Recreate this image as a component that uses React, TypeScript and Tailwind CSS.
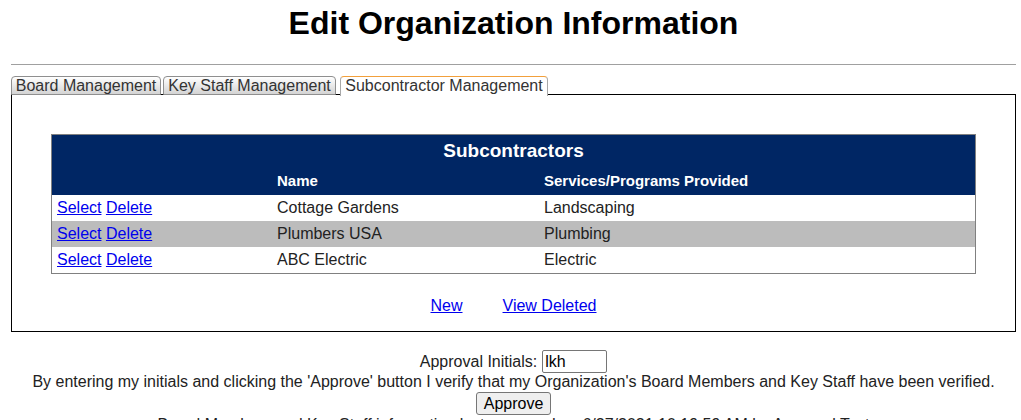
const rows = [
  { name: "Cottage Gardens", service: "Landscaping" },
  { name: "Plumbers USA", service: "Plumbing" },
  { name: "ABC Electric", service: "Electric" },
];

const tabs = [
  { label: "Board Management", w: "w-[150px]" },
  { label: "Key Staff Management", w: "w-[173px]" },
  { label: "Subcontractor Management", w: "w-[208px]" },
];
const ACTIVE_TAB = 2;

export default function App() {
  return (
    <div className="min-h-screen bg-white font-['Liberation_Sans',Arial,sans-serif] text-[16px] text-black">
      <div className="ml-[11px] mr-[5px]">
        <h1 className="pt-[5px] text-center text-[32px] font-bold leading-[37px]">
          Edit Organization Information
        </h1>

        <hr className="mt-[22px] border-t border-[#a0a0a0]" />

        {/* Tabs */}
        <div className="mt-[11px] flex items-start gap-[2px]">
          {tabs.map((t, i) =>
            i === ACTIVE_TAB ? (
              <div
                key={t.label}
                className={`relative z-10 ml-[2px] h-[20px] ${t.w} rounded-t-[4px] border border-b-0 border-[#a8a8a8] border-t-[#f2a03c] bg-white text-center leading-[17px] text-[#333]`}
              >
                {t.label}
              </div>
            ) : (
              <div
                key={t.label}
                className={`h-[19px] ${t.w} rounded-t-[4px] border border-[#8f8f8f] bg-gradient-to-b from-white to-[#d4d4d4] text-center leading-[17px] text-[#333]`}
              >
                {t.label}
              </div>
            )
          )}
        </div>

        {/* Panel */}
        <div className="-mt-[2px] border border-black px-[39px] pt-[39px] pb-[16px]">
          <div className="border border-[#808080]">
            <div className="bg-[#002664] text-white">
              <div className="text-center text-[19px] font-bold leading-[31px]">Subcontractors</div>
              <div className="grid h-[29px] grid-cols-[220px_267px_1fr] text-[15px] font-bold leading-[29px]">
                <div className="pl-[5px]"></div>
                <div className="pl-[5px]">Name</div>
                <div className="pl-[5px]">Services/Programs Provided</div>
              </div>
            </div>
            {rows.map((r, i) => (
              <div
                key={r.name}
                className={`grid h-[26px] grid-cols-[220px_267px_1fr] leading-[26px] text-[#222] ${
                  i === 1 ? "bg-[#bcbcbc]" : "bg-white"
                }`}
              >
                <div className="pl-[5px]">
                  <a href="#" className="text-[#0000ee] underline">Select</a>{" "}
                  <a href="#" className="text-[#0000ee] underline">Delete</a>
                </div>
                <div className="pl-[5px]">{r.name}</div>
                <div className="pl-[5px]">{r.service}</div>
              </div>
            ))}
          </div>

          <div className="mt-[23px] flex justify-center gap-[40px] leading-[18px]">
            <a href="#" className="text-[#0000ee] underline">New</a>
            <a href="#" className="text-[#0000ee] underline">View Deleted</a>
          </div>
        </div>

        {/* Approval */}
        <div className="mt-[18px] text-center text-[#222]">
          <div className="flex h-[23px] items-center justify-center gap-[5px]">
            <span className="leading-[18px]">Approval Initials:</span>
            <input
              defaultValue="lkh"
              className="h-[23px] w-[65px] rounded-[2px] border border-[#767676] px-[2px] text-[16px] text-black outline-none"
            />
          </div>
          <p className="leading-[18px]">
            By entering my initials and clicking the 'Approve' button I verify that my Organization's Board Members and Key Staff have been verified.
          </p>
          <button className="mt-[1px] h-[23px] rounded-[3px] border border-[#767676] bg-[#efefef] px-[7px] leading-[21px] text-black">
            Approve
          </button>
          <p className="leading-[18px]">
            Board Members and Key Staff information last approved on 6/27/2021 10:19:59 AM by Approval Test
          </p>
        </div>
      </div>
    </div>
  );
}
